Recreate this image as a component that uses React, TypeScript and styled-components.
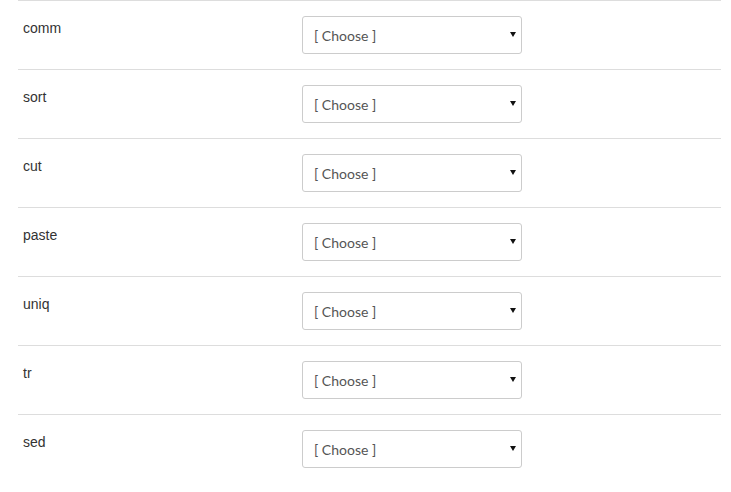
import styled, { createGlobalStyle } from 'styled-components';

const GlobalStyle = createGlobalStyle`
  body {
    margin: 0;
    background: #fff;
    font-family: 'Liberation Sans', Arial, sans-serif;
    font-size: 14px;
    color: #333;
  }
`;

const commands = ['comm', 'sort', 'cut', 'paste', 'uniq', 'tr', 'sed'];

const App = () => {
  return (
    <>
      <GlobalStyle />
      <Table>
        {commands.map((name) => (
          <Row key={name}>
            <Label>{name}</Label>
            <SelectCell>
              <SelectWrap>
                <Select defaultValue="">
                  <option value="">[ Choose ]</option>
                  <option value="yes">Yes</option>
                  <option value="no">No</option>
                </Select>
                <Caret width="6" height="5" viewBox="0 0 6 5">
                  <path d="M0 0h6L3 5z" fill="#111" />
                </Caret>
              </SelectWrap>
            </SelectCell>
          </Row>
        ))}
      </Table>
    </>
  );
};

const Table = styled.div`
  margin-left: 18px;
  width: 703px;
`;

const Row = styled.div`
  display: grid;
  grid-template-columns: 284px 1fr;
  border-top: 1px solid #ddd;
  height: 69px;
  box-sizing: border-box;
`;

const Label = styled.div`
  padding: 17px 0 0 5px;
  line-height: 20px;
  color: #333;
`;

const SelectCell = styled.div`
  padding-top: 15px;
`;

const SelectWrap = styled.div`
  position: relative;
  width: 220px;
`;

const Select = styled.select`
  appearance: none;
  -webkit-appearance: none;
  width: 220px;
  height: 38px;
  box-sizing: border-box;
  border: 1px solid #ccc;
  border-radius: 3px;
  background: #fff;
  padding: 1px 24px 0 11px;
  font-family: Lato, 'Open Sans', sans-serif;
  font-size: 14px;
  color: #555;
  outline: none;
`;

const Caret = styled.svg`
  position: absolute;
  right: 6px;
  top: 16px;
  pointer-events: none;
`;

export default App;
